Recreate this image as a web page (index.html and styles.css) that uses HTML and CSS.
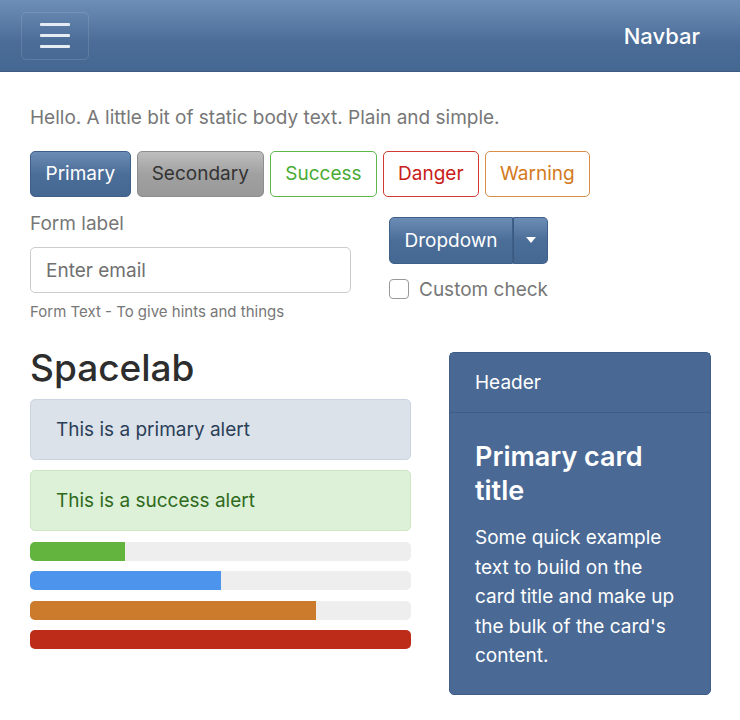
FILE: index.html
```html
<!DOCTYPE html>
<html>
<head>
<meta charset="utf-8">
<link rel="stylesheet" href="styles.css">
</head>
<body>
<nav class="navbar">
  <button class="toggler" aria-label="menu">
    <span class="bar"></span><span class="bar"></span><span class="bar"></span>
  </button>
  <span class="brand">Navbar</span>
</nav>
<main class="page">
  <p class="lead-text">Hello. A little bit of static body text. Plain and simple.</p>
  <div class="btn-row">
    <button class="btn btn-primary">Primary</button>
    <button class="btn btn-secondary">Secondary</button>
    <button class="btn btn-outline-success">Success</button>
    <button class="btn btn-outline-danger">Danger</button>
    <button class="btn btn-outline-warning">Warning</button>
  </div>
  <div class="form-row">
    <div class="form-group">
      <label class="form-label">Form label</label>
      <div class="input">Enter email</div>
      <div class="form-text">Form Text - To give hints and things</div>
    </div>
    <div class="side-controls">
      <div class="split">
        <button class="btn btn-primary split-main">Dropdown</button>
        <button class="btn btn-primary split-caret" aria-label="toggle"><span class="caret"></span></button>
      </div>
      <label class="check"><span class="check-box"></span>Custom check</label>
    </div>
  </div>
  <div class="lower">
    <div class="left-col">
      <h1 class="title">Spacelab</h1>
      <div class="alert alert-primary">This is a primary alert</div>
      <div class="alert alert-success">This is a success alert</div>
      <div class="progress"><div class="fill fill-success" style="width:25%"></div></div>
      <div class="progress"><div class="fill fill-info" style="width:50%"></div></div>
      <div class="progress"><div class="fill fill-warning" style="width:75%"></div></div>
      <div class="progress"><div class="fill fill-danger" style="width:100%"></div></div>
    </div>
    <div class="card">
      <div class="card-header">Header</div>
      <div class="card-body">
        <h4 class="card-title">Primary card title</h4>
        <p class="card-text">Some quick example text to build on the card title and make up the bulk of the card's content.</p>
      </div>
    </div>
  </div>
</main>
</body>
</html>
```
FILE: styles.css
```css
* { box-sizing: border-box; }
html, body { margin: 0; padding: 0; background: #fff; }
body {
  font-family: Inter, "Open Sans", "Liberation Sans", sans-serif;
  font-size: 19px;
  color: #777;
}
.navbar {
  height: 72px;
  display: flex;
  align-items: center;
  justify-content: space-between;
  padding: 0 40px 0 21px;
  background: linear-gradient(#6d8fb7, #4a6c97 60%, #456892);
  border-bottom: 1px solid #3d5b80;
}
.toggler {
  width: 68px;
  height: 48px;
  border: 1px solid rgba(255,255,255,0.12);
  border-radius: 5px;
  background: transparent;
  display: flex;
  flex-direction: column;
  justify-content: center;
  align-items: center;
  gap: 8.5px;
  padding: 0;
}
.bar { display: block; width: 30px; height: 2.5px; background: #e6ecf3; border-radius: 1px; }
.brand { color: #fff; font-size: 22px; font-weight: 500; }
.page { padding: 32px 29px 0 30px; }
.lead-text { margin: 0 0 18px; line-height: 1.5; }
.btn-row { display: flex; gap: 6px; }
.btn {
  font-family: inherit;
  font-size: 19px;
  height: 46px;
  padding: 0 14.5px;
  border-radius: 5px;
  border: 1px solid transparent;
  background: #fff;
  line-height: 1;
}
.btn-primary {
  color: #fff;
  background: linear-gradient(#6b8cb5, #4b6e98 50%, #446892);
  border-color: #3e5f88;
}
.btn-secondary {
  color: #333;
  padding: 0 14px;
  background: linear-gradient(#bdbdbd, #a1a1a1 50%, #999);
  border-color: #8e8e8e;
}
.btn-outline-success { color: #4aac35; border-color: #5cb84a; }
.btn-outline-danger { color: #c8201a; border-color: #cf3a33; padding: 0 14px; }
.btn-outline-warning { color: #d37a21; border-color: #d98d47; }
.form-row { display: flex; gap: 38px; margin-top: 16px; }
.form-group { width: 321px; }
.form-label { display: block; margin-bottom: 12px; line-height: 1.2; }
.input {
  height: 46px;
  border: 1px solid #ccc;
  border-radius: 5px;
  padding: 0 15px;
  display: flex;
  align-items: center;
  color: #707070;
}
.form-text { font-size: 15px; margin-top: 9px; color: #777; }
.side-controls { display: flex; flex-direction: column; gap: 14px; padding-top: 4px; }
.split { display: flex; }
.split-main { border-radius: 5px 0 0 5px; padding: 0 14.5px; height: 47px; }
.split-caret {
  border-radius: 0 5px 5px 0;
  width: 35px;
  height: 47px;
  padding: 0;
  border-left-color: #3a5a82;
  display: flex;
  align-items: center;
  justify-content: center;
}
.caret {
  width: 0; height: 0;
  border-left: 5px solid transparent;
  border-right: 5px solid transparent;
  border-top: 6px solid #fff;
}
.check { display: flex; align-items: center; gap: 10px; color: #777; }
.check-box {
  width: 20px; height: 20px;
  border: 1px solid #999;
  border-radius: 4px;
  background: #fff;
}
.lower { display: flex; gap: 38px; margin-top: 25px; align-items: flex-start; }
.left-col { width: 381px; }
.title { font-size: 37px; font-weight: 500; color: #2d2d2d; margin: 0 0 8px; line-height: 1.2; }
.alert {
  height: 61px;
  display: flex;
  align-items: center;
  padding: 0 25px;
  border-radius: 5px;
  border: 1px solid;
  margin-bottom: 10.5px;
}
.alert-primary { background: #dbe2ea; border-color: #cbd5e1; color: #2b3f58; }
.alert-success { background: #ddf0d8; border-color: #cbe7c3; color: #2f6a1c; }
.progress {
  height: 19px;
  background: #eee;
  border-radius: 5px;
  overflow: hidden;
  margin-bottom: 10.5px;
}
.fill { height: 100%; }
.fill-success { background: #62b43f; }
.fill-info { background: #4d95ec; }
.fill-warning { background: #cc7a2b; }
.fill-danger { background: #bd2b19; }
.card {
  width: 262px;
  margin-top: 6px;
  background: #4a6a95;
  border: 1px solid #3f5e86;
  border-radius: 5px;
  color: #fff;
}
.card-header {
  height: 60px;
  display: flex;
  align-items: center;
  padding: 0 25px;
  border-bottom: 1px solid #3f5d84;
  background: #496994;
}
.card-body { padding: 27px 25px 23px; }
.card-title { font-size: 27px; font-weight: 600; margin: 0 0 15px; line-height: 34px; }
.card-text { margin: 0; line-height: 29.5px; }
```
